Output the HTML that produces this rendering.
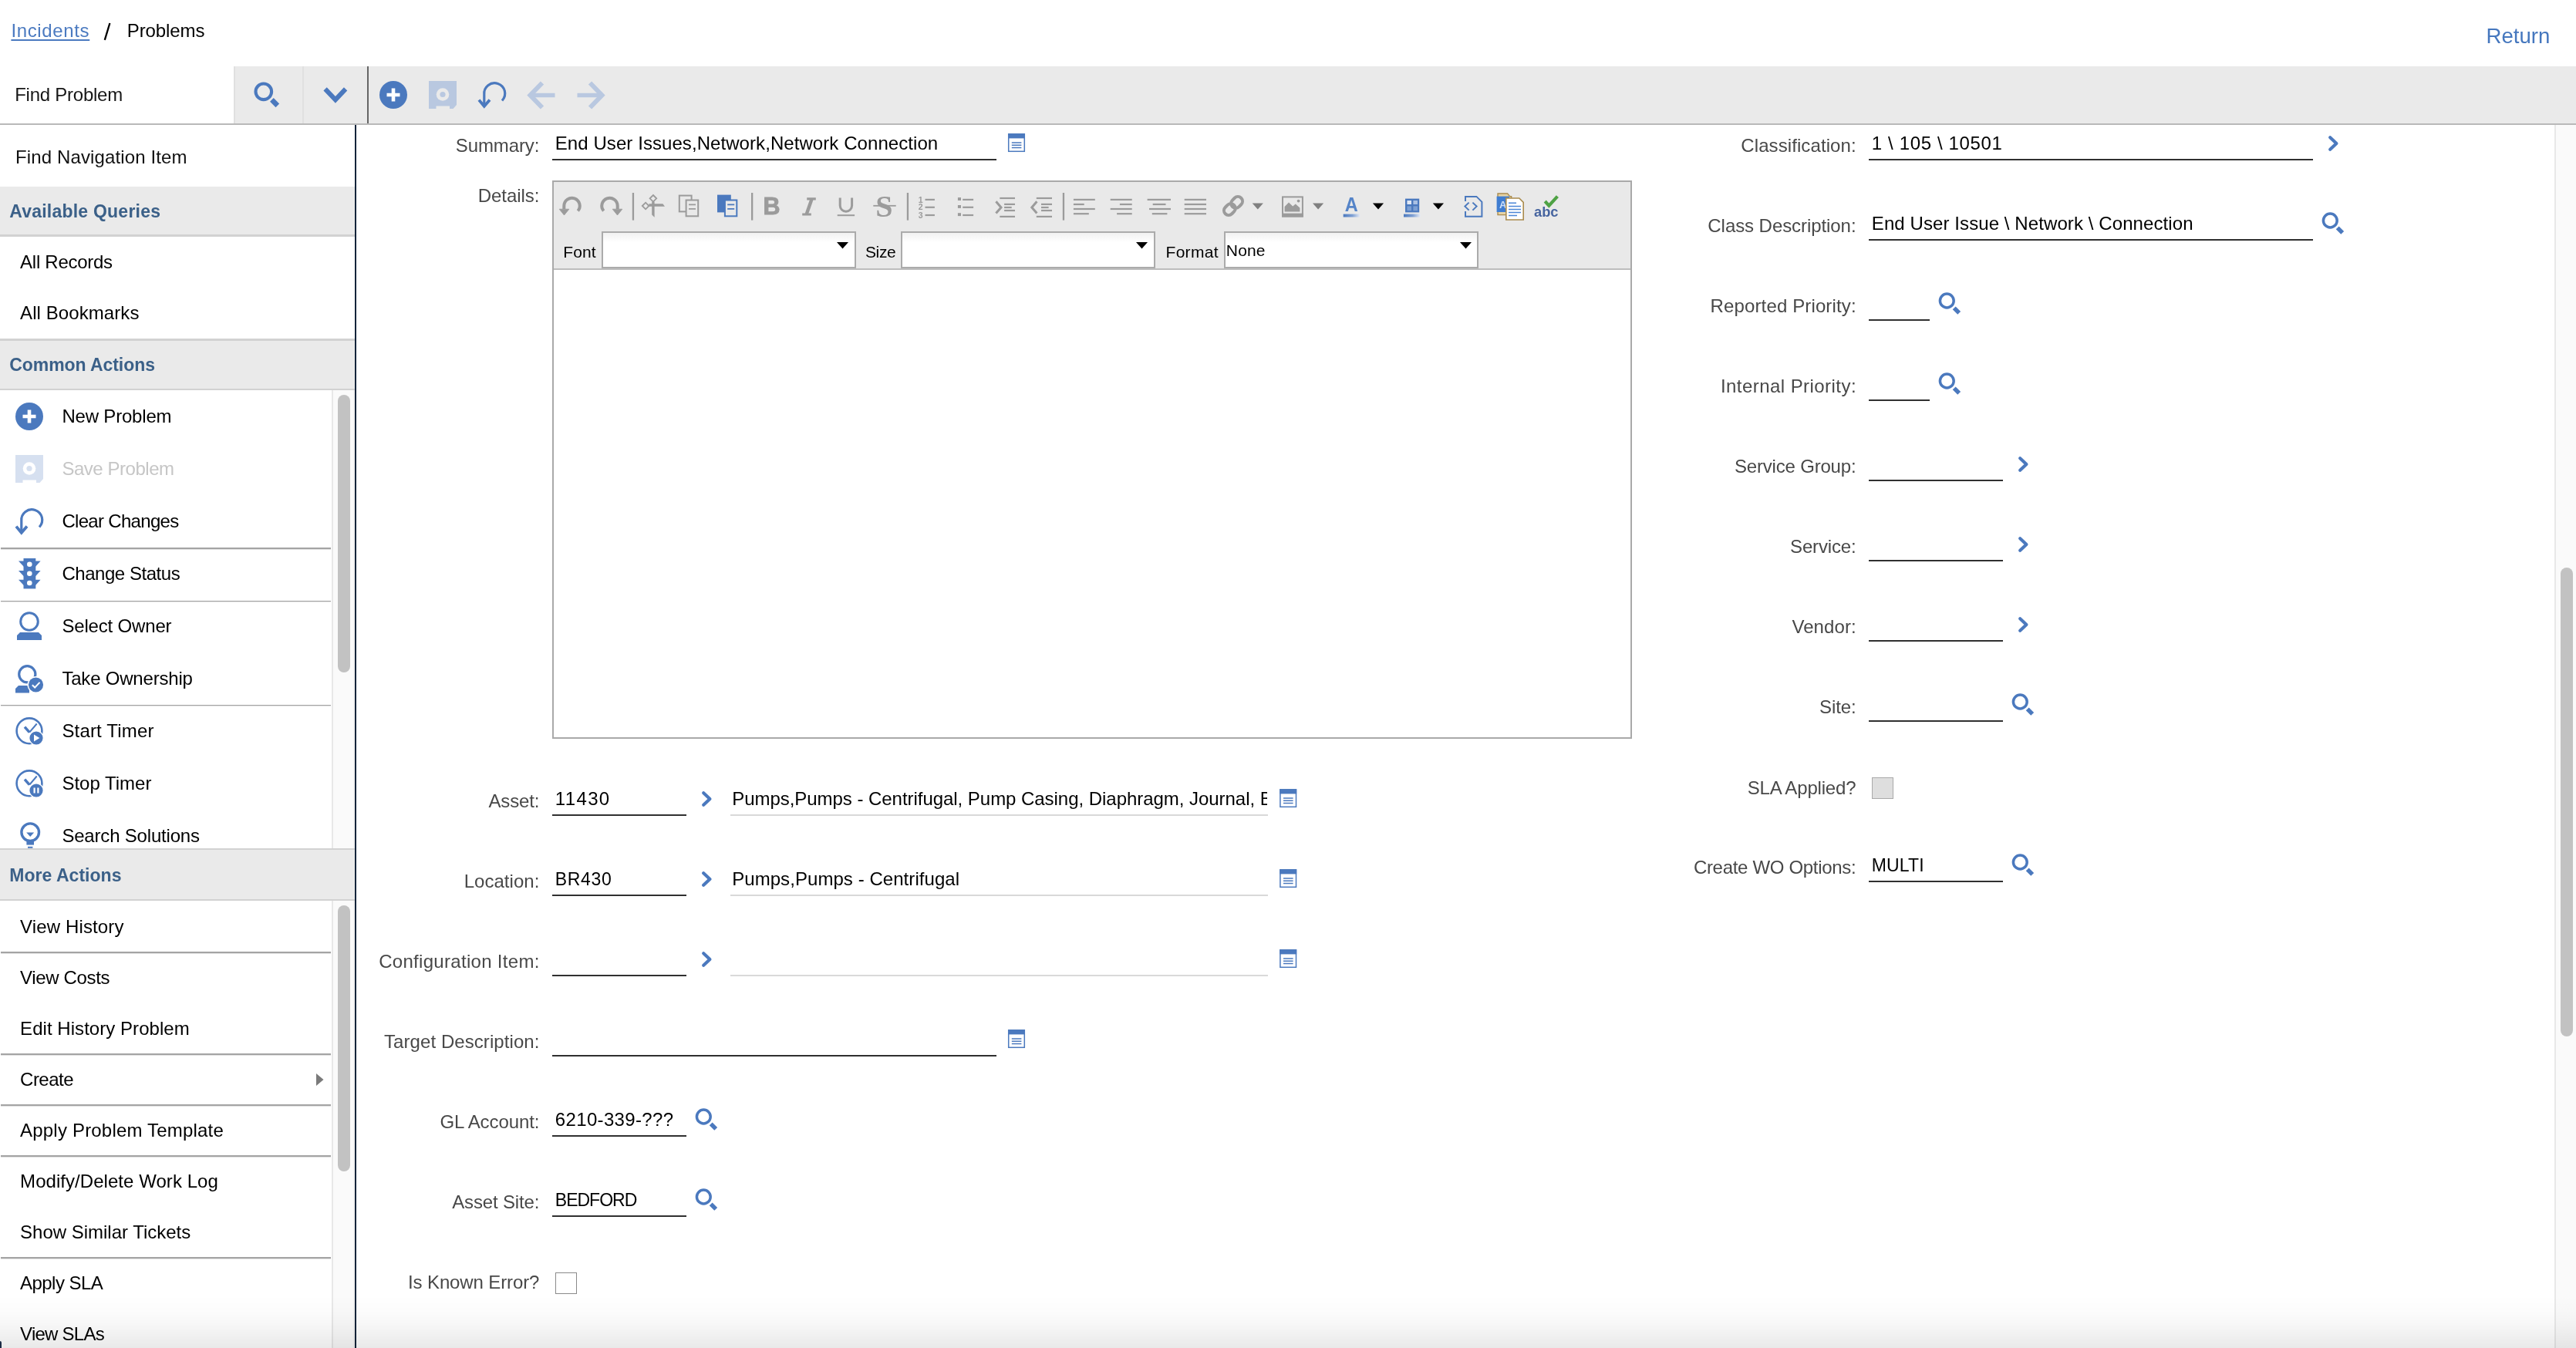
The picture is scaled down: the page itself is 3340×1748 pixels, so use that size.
<!DOCTYPE html>
<html lang="en"><head><meta charset="utf-8"><title>Problems</title>
<style>
html,body{margin:0;padding:0}
body{width:3340px;height:1748px;position:relative;overflow:hidden;background:#fff;font-family:"Liberation Sans",sans-serif;font-size:24px;color:#000}
.a{position:absolute}
.t{position:absolute;line-height:1;white-space:nowrap}
svg{overflow:visible}
</style></head><body>
<div id="app" class="a" style="left:0;top:0;width:3340px;height:1748px;will-change:transform">

<div id="header">
<div class="t" style="top:27.9px;font-size:24px;color:#4b7ac0;letter-spacing:0.643px;left:14.4px;text-decoration:underline;text-decoration-thickness:1.5px;text-underline-offset:3px;">Incidents</div>
<svg class="a" style="left:130px;top:26px;" width="20" height="30" viewBox="0 0 20 30"><path d="M12.4 4L5.8 25.8" stroke="#000" stroke-width="2.3" fill="none"/></svg>
<div class="t" style="top:27.9px;font-size:24px;color:#000;letter-spacing:-0.11px;left:164.8px;">Problems</div>
<div class="t" style="top:33.2px;font-size:27.6px;color:#4577be;letter-spacing:-0.008px;right:33.7px;">Return</div>
</div>
<div id="toolbar">
<div class="a" style="left:0px;top:86px;width:3340px;height:74.5px;background:#eaeaea;"></div>
<div class="a" style="left:0px;top:86px;width:303px;height:74.5px;background:#fff;"></div>
<div class="a" style="left:303px;top:86px;width:2px;height:74.5px;background:#e0e0e0;"></div>
<div class="a" style="left:392px;top:86px;width:2px;height:74.5px;background:#e0e0e0;"></div>
<div class="a" style="left:476px;top:86px;width:2px;height:74.5px;background:#666;"></div>
<div class="a" style="left:0px;top:160.3px;width:3340px;height:1.7px;background:#b9b9b9;"></div>
<div class="t" style="top:111.2px;font-size:24px;color:#161616;letter-spacing:-0.248px;left:19.2px;">Find Problem</div>
<svg class="a" style="left:0px;top:0px;" width="3340" height="162" viewBox="0 0 3340 162"><circle cx="341.8" cy="118.8" r="10.3" fill="none" stroke="#4b79be" stroke-width="4.1"/><path d="M352.4 129.4L359.8 136.8" stroke="#4b79be" stroke-width="6.6" fill="none"/><path d="M421.6 115.4L434.9 129.3L448.1 115.4" fill="none" stroke="#4b79be" stroke-width="6"/></svg>
<svg class="a" style="left:492px;top:105px;" width="36" height="36" viewBox="0 0 36 36"><circle cx="18" cy="18" r="18" fill="#4b79be"/><path d="M18 9.5v17M9.5 18h17" stroke="#fff" stroke-width="4.6" fill="none"/></svg>
<svg class="a" style="left:556px;top:105px;" width="36" height="36" viewBox="0 0 36 36"><path d="M0 0H36V31L31.5 36H27V32.5H9.5V36H0Z" fill="#b9c8e0"/><circle cx="18" cy="17.5" r="8.3" fill="#eaeaea"/><circle cx="18" cy="17.5" r="3.6" fill="#b9c8e0"/></svg>
<svg class="a" style="left:619.5px;top:107px;" width="37" height="34" viewBox="0 0 37 34"><path d="M31 23.5A13.5 13.5 0 1 0 7.8 15.6V30.5" fill="none" stroke="#4b79be" stroke-width="3.2"/><path d="M1 22.6L7.8 30.8L15 22.6" fill="none" stroke="#4b79be" stroke-width="3.8000000000000003" stroke-linejoin="miter"/></svg>
<svg class="a" style="left:684px;top:105.5px;" width="36" height="35" viewBox="0 0 36 35"><path d="M35.5 17.5H6" stroke="#b9c8e0" stroke-width="5.5" fill="none"/><path d="M19 1.5L3.5 17.5L19 33.5" stroke="#b9c8e0" stroke-width="6" fill="none"/></svg>
<svg class="a" style="left:748px;top:105.5px;" width="36" height="35" viewBox="0 0 36 35"><path d="M0.5 17.5H30" stroke="#b9c8e0" stroke-width="5.5" fill="none"/><path d="M17 1.5L32.5 17.5L17 33.5" stroke="#b9c8e0" stroke-width="6" fill="none"/></svg>
</div>
<div id="nav">
<div class="a" style="left:460px;top:162px;width:2px;height:1586px;background:#11243a;"></div>
<div class="t" style="top:191.5px;font-size:24px;color:#111;letter-spacing:0.131px;left:20.0px;">Find Navigation Item</div>
<div class="a" style="left:0px;top:242.3px;width:460px;height:62.099999999999966px;background:#eaeaea;"></div>
<div class="a" style="left:0px;top:304.4px;width:460px;height:2.2px;background:#d2d2d2;"></div>
<div class="t" style="top:263.0px;font-size:23px;color:#3b6088;font-weight:bold;letter-spacing:0.226px;left:12.2px;">Available Queries</div>
<div class="t" style="top:327.9px;font-size:24px;color:#000;letter-spacing:-0.271px;left:26.1px;">All Records</div>
<div class="t" style="top:393.7px;font-size:24px;color:#000;letter-spacing:0.077px;left:26.1px;">All Bookmarks</div>
<div class="a" style="left:0px;top:439.4px;width:460px;height:2.3px;background:#d2d2d2;"></div>
<div class="a" style="left:0px;top:441.7px;width:460px;height:62.30000000000001px;background:#eaeaea;"></div>
<div class="a" style="left:0px;top:504px;width:460px;height:2.2px;background:#d2d2d2;"></div>
<div class="t" style="top:462.3px;font-size:23px;color:#3b6088;font-weight:bold;letter-spacing:-0.057px;left:12.2px;">Common Actions</div>
<div class="a" style="left:430px;top:506.2px;width:30px;height:594px;background:#fafafa;border-left:2px solid #e8e8e8;border-right:2px solid #f1f1f1;box-sizing:border-box;"></div>
<div class="a" style="left:438px;top:512px;width:16px;height:360px;background:#c2c2c2;border-radius:8px;"></div>
<div class="t" style="top:527.9px;font-size:24px;color:#000;letter-spacing:-0.185px;left:80.4px;">New Problem</div>
<div class="t" style="top:595.9px;font-size:24px;color:#c6c6c6;letter-spacing:-0.458px;left:80.4px;">Save Problem</div>
<div class="t" style="top:663.9px;font-size:24px;color:#000;letter-spacing:-0.691px;left:80.4px;">Clear Changes</div>
<div class="t" style="top:731.9px;font-size:24px;color:#000;letter-spacing:-0.456px;left:80.4px;">Change Status</div>
<div class="t" style="top:799.9px;font-size:24px;color:#000;letter-spacing:-0.169px;left:80.4px;">Select Owner</div>
<div class="t" style="top:867.9px;font-size:24px;color:#000;letter-spacing:-0.198px;left:80.4px;">Take Ownership</div>
<div class="t" style="top:935.9px;font-size:24px;color:#000;letter-spacing:0.165px;left:80.4px;">Start Timer</div>
<div class="t" style="top:1003.9px;font-size:24px;color:#000;letter-spacing:-0.004px;left:80.4px;">Stop Timer</div>
<div class="t" style="top:1071.9px;font-size:24px;color:#000;letter-spacing:-0.19px;left:80.4px;">Search Solutions</div>
<div class="a" style="left:1px;top:710.4px;width:428px;height:1.5px;background:#a4a4a4;"></div>
<div class="a" style="left:1px;top:711.9px;width:428px;height:0.8px;background:#e2e2e2;"></div>
<div class="a" style="left:1px;top:778.6px;width:428px;height:1.5px;background:#a4a4a4;"></div>
<div class="a" style="left:1px;top:780.1px;width:428px;height:0.8px;background:#e2e2e2;"></div>
<div class="a" style="left:1px;top:913.8px;width:428px;height:1.5px;background:#a4a4a4;"></div>
<div class="a" style="left:1px;top:915.3px;width:428px;height:0.8px;background:#e2e2e2;"></div>
<div class="a" style="left:0;top:506px;width:430px;height:594px;overflow:hidden">
<svg class="a" style="left:20px;top:16px;" width="36" height="36" viewBox="0 0 36 36"><circle cx="18" cy="18" r="18" fill="#4b79be"/><path d="M18 9.5v17M9.5 18h17" stroke="#fff" stroke-width="4.6" fill="none"/></svg>
<svg class="a" style="left:20px;top:84px;" width="36" height="36" viewBox="0 0 36 36"><path d="M0 0H36V31L31.5 36H27V32.5H9.5V36H0Z" fill="#d6e0f0"/><circle cx="18" cy="17.5" r="8.3" fill="#fff"/><circle cx="18" cy="17.5" r="3.6" fill="#d6e0f0"/></svg>
<svg class="a" style="left:19.5px;top:154px;" width="37" height="34" viewBox="0 0 37 34"><path d="M31 23.5A13.5 13.5 0 1 0 7.8 15.6V30.5" fill="none" stroke="#4b79be" stroke-width="3.2"/><path d="M1 22.6L7.8 30.8L15 22.6" fill="none" stroke="#4b79be" stroke-width="3.8000000000000003" stroke-linejoin="miter"/></svg>
<svg class="a" style="left:23.7px;top:218.20000000000005px;" width="29" height="40" viewBox="0 0 29 40"><rect x="6.5" y="0" width="15.8" height="39.4" fill="#4b79be"/><path d="M7.5 3.5H0L7.5 11.5ZM21.3 3.5H28.6L21.3 11.5Z" fill="#4b79be"/><path d="M7.5 15.9H0L7.5 23.9ZM21.3 15.9H28.6L21.3 23.9Z" fill="#4b79be"/><path d="M7.5 27.8H0L7.5 35.8ZM21.3 27.8H28.6L21.3 35.8Z" fill="#4b79be"/><circle cx="14.3" cy="7.7" r="3.3" fill="#fff"/><circle cx="14.3" cy="19.7" r="3.3" fill="#fff"/><circle cx="14.3" cy="32" r="3.3" fill="#fff"/></svg>
<svg class="a" style="left:22px;top:288px;" width="32" height="36" viewBox="0 0 32 36"><circle cx="16" cy="12" r="11.3" fill="#fff" stroke="#4b79be" stroke-width="3"/><path d="M0 36V30L4 26H28L32 30V36Z" fill="#4b79be"/></svg>
<svg class="a" style="left:19.8px;top:355.6px;" width="38" height="37" viewBox="0 0 38 37"><circle cx="15.3" cy="12.3" r="10.6" fill="#fff" stroke="#4b79be" stroke-width="3.2"/><path d="M0 36.5V31L4 27H18V36.5Z" fill="#4b79be"/><circle cx="26.5" cy="26" r="11" fill="#fff"/><circle cx="26.5" cy="26" r="9.6" fill="#4b79be"/><path d="M21.8 26.2l3.4 3.3l6.3-6.6" fill="none" stroke="#fff" stroke-width="2"/></svg>
<svg class="a" style="left:19.9px;top:424px;" width="37" height="37" viewBox="0 0 37 37"><circle cx="18" cy="17.8" r="16.4" fill="none" stroke="#4b79be" stroke-width="2.6"/><path d="M12 12.7l6.2 7" fill="none" stroke="#4b79be" stroke-width="3.4"/><path d="M18.2 19.7l9.5-11.2" fill="none" stroke="#4b79be" stroke-width="2"/><circle cx="27" cy="27" r="9.8" fill="#fff"/><circle cx="27" cy="27" r="8.6" fill="#4b79be"/><path d="M24 22.6v8.8l7.4-4.4z" fill="#fff"/></svg>
<svg class="a" style="left:19.9px;top:492px;" width="37" height="37" viewBox="0 0 37 37"><circle cx="18" cy="17.8" r="16.4" fill="none" stroke="#4b79be" stroke-width="2.6"/><path d="M12 12.7l6.2 7" fill="none" stroke="#4b79be" stroke-width="3.4"/><path d="M18.2 19.7l9.5-11.2" fill="none" stroke="#4b79be" stroke-width="2"/><circle cx="27" cy="27" r="9.8" fill="#fff"/><circle cx="27" cy="27" r="8.6" fill="#4b79be"/><path d="M24.6 23.4v7.2M29.4 23.4v7.2" stroke="#fff" stroke-width="2.2" fill="none"/></svg>
<svg class="a" style="left:25.7px;top:560.2px;" width="27" height="36" viewBox="0 0 27 36"><circle cx="13.2" cy="13.2" r="11.3" fill="none" stroke="#4b79be" stroke-width="3.4"/><path d="M8.2 13.6h10l-5 5.4z" fill="#4b79be"/><path d="M8.4 24.8h9.6v4.8h-9.6z" fill="#4b79be"/><path d="M10 31.8h6.4v2h-6.4z" fill="#4b79be"/></svg>
</div>
<div class="a" style="left:0px;top:1100.0px;width:460px;height:2.3px;background:#d2d2d2;"></div>
<div class="a" style="left:0px;top:1102.3px;width:460px;height:63.600000000000136px;background:#eaeaea;"></div>
<div class="a" style="left:0px;top:1165.9px;width:460px;height:2.2px;background:#d2d2d2;"></div>
<div class="t" style="top:1124.0px;font-size:23px;color:#3b6088;font-weight:bold;letter-spacing:0.043px;left:12.2px;">More Actions</div>
<div class="a" style="left:430px;top:1168px;width:30px;height:580px;background:#fafafa;border-left:2px solid #e8e8e8;border-right:2px solid #f1f1f1;box-sizing:border-box;"></div>
<div class="a" style="left:438px;top:1174px;width:16px;height:344.5px;background:#c2c2c2;border-radius:8px;"></div>
<div class="t" style="top:1190.0px;font-size:24px;color:#000;letter-spacing:0.125px;left:26.1px;">View History</div>
<div class="t" style="top:1256.0px;font-size:24px;color:#000;letter-spacing:-0.345px;left:26.1px;">View Costs</div>
<div class="t" style="top:1322.0px;font-size:24px;color:#000;letter-spacing:0.046px;left:26.1px;">Edit History Problem</div>
<div class="t" style="top:1388.0px;font-size:24px;color:#000;letter-spacing:-0.527px;left:26.1px;">Create</div>
<div class="t" style="top:1454.0px;font-size:24px;color:#000;letter-spacing:0.191px;left:26.1px;">Apply Problem Template</div>
<div class="t" style="top:1520.0px;font-size:24px;color:#000;letter-spacing:0.049px;left:26.1px;">Modify/Delete Work Log</div>
<div class="t" style="top:1586.0px;font-size:24px;color:#000;letter-spacing:-0.015px;left:26.1px;">Show Similar Tickets</div>
<div class="t" style="top:1652.0px;font-size:24px;color:#000;letter-spacing:-0.558px;left:26.1px;">Apply SLA</div>
<div class="t" style="top:1718.0px;font-size:24px;color:#000;letter-spacing:-0.752px;left:26.1px;">View SLAs</div>
<div class="a" style="left:1px;top:1234px;width:428px;height:1.5px;background:#a4a4a4;"></div>
<div class="a" style="left:1px;top:1235.5px;width:428px;height:0.8px;background:#e2e2e2;"></div>
<div class="a" style="left:1px;top:1366px;width:428px;height:1.5px;background:#a4a4a4;"></div>
<div class="a" style="left:1px;top:1367.5px;width:428px;height:0.8px;background:#e2e2e2;"></div>
<div class="a" style="left:1px;top:1432px;width:428px;height:1.5px;background:#a4a4a4;"></div>
<div class="a" style="left:1px;top:1433.5px;width:428px;height:0.8px;background:#e2e2e2;"></div>
<div class="a" style="left:1px;top:1498px;width:428px;height:1.5px;background:#a4a4a4;"></div>
<div class="a" style="left:1px;top:1499.5px;width:428px;height:0.8px;background:#e2e2e2;"></div>
<div class="a" style="left:1px;top:1630px;width:428px;height:1.5px;background:#a4a4a4;"></div>
<div class="a" style="left:1px;top:1631.5px;width:428px;height:0.8px;background:#e2e2e2;"></div>
<svg class="a" style="left:410px;top:1391.5px;" width="10" height="16" viewBox="0 0 10 16"><path d="M0 0L9.5 8L0 16Z" fill="#7a7a7a"/></svg>
</div>
<div id="form">
<div class="t" style="top:177.0px;font-size:24px;color:#484848;letter-spacing:-0.107px;right:2640.7px;">Summary:</div>
<div class="a" style="left:716px;top:206px;width:576px;height:2px;background:#303030;"></div>
<div class="t" style="top:174.2px;font-size:24px;color:#000;letter-spacing:0.07px;left:719.8px;">End User Issues,Network,Network Connection</div>
<div class="t" style="top:241.7px;font-size:24px;color:#484848;letter-spacing:-0.047px;right:2640.6px;">Details:</div>
<div class="t" style="top:1027.0px;font-size:24px;color:#484848;letter-spacing:-0.138px;right:2640.7px;">Asset:</div>
<div class="t" style="top:1131.0px;font-size:24px;color:#484848;letter-spacing:0.037px;right:2640.6px;">Location:</div>
<div class="t" style="top:1235.0px;font-size:24px;color:#484848;letter-spacing:0.302px;right:2640.3px;">Configuration Item:</div>
<div class="t" style="top:1339.0px;font-size:24px;color:#484848;letter-spacing:0.073px;right:2640.5px;">Target Description:</div>
<div class="t" style="top:1443.0px;font-size:24px;color:#484848;letter-spacing:-0.096px;right:2640.7px;">GL Account:</div>
<div class="t" style="top:1547.0px;font-size:24px;color:#484848;letter-spacing:-0.142px;right:2640.7px;">Asset Site:</div>
<div class="a" style="left:716px;top:1056px;width:174px;height:2px;background:#303030;"></div>
<div class="t" style="top:1024.2px;font-size:24px;color:#000;letter-spacing:1.361px;left:719.8px;">11430</div>
<div class="a" style="left:947px;top:1015px;width:696px;height:40px;overflow:hidden">
<div class="t" style="left:2.2px;top:8.7px;font-size:24px;letter-spacing:-0.041px">Pumps,Pumps - Centrifugal, Pump Casing, Diaphragm, Journal, Bearing</div></div>
<div class="a" style="left:947px;top:1056px;width:697px;height:2px;background:#d9d9d9;"></div>
<div class="a" style="left:716px;top:1160px;width:174px;height:2px;background:#303030;"></div>
<div class="t" style="top:1129.0px;font-size:23px;color:#000;letter-spacing:0.669px;left:719.8px;">BR430</div>
<div class="a" style="left:947px;top:1160px;width:697px;height:2px;background:#d9d9d9;"></div>
<div class="t" style="top:1128.2px;font-size:24px;color:#000;letter-spacing:0.06px;left:949.2px;">Pumps,Pumps - Centrifugal</div>
<div class="a" style="left:716px;top:1264px;width:174px;height:2px;background:#303030;"></div>
<div class="a" style="left:947px;top:1264px;width:697px;height:2px;background:#d9d9d9;"></div>
<div class="a" style="left:716px;top:1368px;width:576px;height:2px;background:#303030;"></div>
<div class="a" style="left:716px;top:1472px;width:174px;height:2px;background:#303030;"></div>
<div class="t" style="top:1440.2px;font-size:24px;color:#000;letter-spacing:0.349px;left:719.8px;">6210-339-???</div>
<div class="a" style="left:716px;top:1576px;width:174px;height:2px;background:#303030;"></div>
<div class="t" style="top:1545.0px;font-size:23px;color:#000;letter-spacing:-0.992px;left:719.8px;">BEDFORD</div>
<div class="t" style="top:1650.8px;font-size:24px;color:#484848;letter-spacing:-0.119px;right:2640.7px;">Is Known Error?</div>
<div class="a" style="left:720px;top:1650px;width:27.6px;height:27.6px;background:#fff;border:1.6px solid #8a8a8a;box-sizing:border-box;"></div>
<div class="t" style="top:177.0px;font-size:24px;color:#484848;letter-spacing:0.089px;right:933.3px;">Classification:</div>
<div class="t" style="top:281.0px;font-size:24px;color:#484848;letter-spacing:-0.07px;right:933.5px;">Class Description:</div>
<div class="t" style="top:385.0px;font-size:24px;color:#484848;letter-spacing:0.133px;right:933.3px;">Reported Priority:</div>
<div class="t" style="top:489.0px;font-size:24px;color:#484848;letter-spacing:0.444px;right:933.0px;">Internal Priority:</div>
<div class="t" style="top:593.0px;font-size:24px;color:#484848;letter-spacing:-0.19px;right:933.6px;">Service Group:</div>
<div class="t" style="top:697.0px;font-size:24px;color:#484848;letter-spacing:-0.171px;right:933.6px;">Service:</div>
<div class="t" style="top:801.0px;font-size:24px;color:#484848;letter-spacing:0.077px;right:933.3px;">Vendor:</div>
<div class="t" style="top:905.0px;font-size:24px;color:#484848;letter-spacing:-0.106px;right:933.5px;">Site:</div>
<div class="t" style="top:1113.0px;font-size:24px;color:#484848;letter-spacing:-0.316px;right:933.7px;">Create WO Options:</div>
<div class="a" style="left:2423px;top:206px;width:576px;height:2px;background:#303030;"></div>
<div class="t" style="top:174.2px;font-size:24px;color:#000;letter-spacing:0.64px;left:2426.8px;">1 \ 105 \ 10501</div>
<div class="a" style="left:2423px;top:310px;width:576px;height:2px;background:#303030;"></div>
<div class="t" style="top:278.2px;font-size:24px;color:#000;letter-spacing:0.088px;left:2426.8px;">End User Issue \ Network \ Connection</div>
<div class="a" style="left:2423px;top:414px;width:79px;height:2px;background:#303030;"></div>
<div class="a" style="left:2423px;top:518px;width:79px;height:2px;background:#303030;"></div>
<div class="a" style="left:2423px;top:622px;width:174px;height:2px;background:#303030;"></div>
<div class="a" style="left:2423px;top:726px;width:174px;height:2px;background:#303030;"></div>
<div class="a" style="left:2423px;top:830px;width:174px;height:2px;background:#303030;"></div>
<div class="a" style="left:2423px;top:934px;width:174px;height:2px;background:#303030;"></div>
<div class="t" style="top:1010.0px;font-size:24px;color:#484848;letter-spacing:-0.172px;right:933.6px;">SLA Applied?</div>
<div class="a" style="left:2427px;top:1008px;width:27.6px;height:27.6px;background:#dedede;border:1.6px solid #a9a9a9;box-sizing:border-box;"></div>
<div class="a" style="left:2423px;top:1142px;width:174px;height:2px;background:#303030;"></div>
<div class="t" style="top:1111.0px;font-size:23px;color:#000;letter-spacing:0.152px;left:2426.8px;">MULTI</div>
<svg class="a" style="left:0px;top:0px;" width="3340" height="1748" viewBox="0 0 3340 1748"><rect x="1307.7" y="173.9" width="20.6" height="22.4" fill="#fff" stroke="#4b79be" stroke-width="1.5"/><rect x="1307.0" y="173.2" width="22" height="6.2" fill="#4b79be"/><path d="M1311.8 185.0h12.6M1311.8 188.3h12.6M1311.8 191.5h12.6" stroke="#4b79be" stroke-width="1.5" fill="none"/><path d="M912.2 1028.3l8.2 7.7l-8.2 7.7" fill="none" stroke="#4b79be" stroke-width="4.2" stroke-linecap="round" stroke-linejoin="round"/><rect x="1659.9" y="1023.9" width="20.6" height="22.4" fill="#fff" stroke="#4b79be" stroke-width="1.5"/><rect x="1659.2" y="1023.2" width="22" height="6.2" fill="#4b79be"/><path d="M1664.0 1035.0h12.6M1664.0 1038.3h12.6M1664.0 1041.5h12.6" stroke="#4b79be" stroke-width="1.5" fill="none"/><path d="M912.2 1132.3l8.2 7.7l-8.2 7.7" fill="none" stroke="#4b79be" stroke-width="4.2" stroke-linecap="round" stroke-linejoin="round"/><rect x="1659.9" y="1127.9" width="20.6" height="22.4" fill="#fff" stroke="#4b79be" stroke-width="1.5"/><rect x="1659.2" y="1127.2" width="22" height="6.2" fill="#4b79be"/><path d="M1664.0 1139.0h12.6M1664.0 1142.3h12.6M1664.0 1145.5h12.6" stroke="#4b79be" stroke-width="1.5" fill="none"/><path d="M912.2 1236.3l8.2 7.7l-8.2 7.7" fill="none" stroke="#4b79be" stroke-width="4.2" stroke-linecap="round" stroke-linejoin="round"/><rect x="1659.9" y="1231.9" width="20.6" height="22.4" fill="#fff" stroke="#4b79be" stroke-width="1.5"/><rect x="1659.2" y="1231.2" width="22" height="6.2" fill="#4b79be"/><path d="M1664.0 1243.0h12.6M1664.0 1246.3h12.6M1664.0 1249.5h12.6" stroke="#4b79be" stroke-width="1.5" fill="none"/><rect x="1307.7" y="1335.9" width="20.6" height="22.4" fill="#fff" stroke="#4b79be" stroke-width="1.5"/><rect x="1307.0" y="1335.2" width="22" height="6.2" fill="#4b79be"/><path d="M1311.8 1347.0h12.6M1311.8 1350.3h12.6M1311.8 1353.5h12.6" stroke="#4b79be" stroke-width="1.5" fill="none"/><circle cx="912.3" cy="1448.0" r="8.9" fill="none" stroke="#4b79be" stroke-width="3.5"/><path d="M921.7 1457.4L928.2 1463.9" stroke="#4b79be" stroke-width="5.5" fill="none"/><circle cx="912.3" cy="1552.0" r="8.9" fill="none" stroke="#4b79be" stroke-width="3.5"/><path d="M921.7 1561.4L928.2 1567.9" stroke="#4b79be" stroke-width="5.5" fill="none"/><path d="M3021.2 178.3l8.2 7.7l-8.2 7.7" fill="none" stroke="#4b79be" stroke-width="4.2" stroke-linecap="round" stroke-linejoin="round"/><circle cx="3021.3" cy="286.0" r="8.9" fill="none" stroke="#4b79be" stroke-width="3.5"/><path d="M3030.7 295.4L3037.2 301.9" stroke="#4b79be" stroke-width="5.5" fill="none"/><circle cx="2524.3" cy="390.0" r="8.9" fill="none" stroke="#4b79be" stroke-width="3.5"/><path d="M2533.7 399.4L2540.2 405.9" stroke="#4b79be" stroke-width="5.5" fill="none"/><circle cx="2524.3" cy="494.0" r="8.9" fill="none" stroke="#4b79be" stroke-width="3.5"/><path d="M2533.7 503.4L2540.2 509.9" stroke="#4b79be" stroke-width="5.5" fill="none"/><path d="M2619.2 594.3l8.2 7.7l-8.2 7.7" fill="none" stroke="#4b79be" stroke-width="4.2" stroke-linecap="round" stroke-linejoin="round"/><path d="M2619.2 698.3l8.2 7.7l-8.2 7.7" fill="none" stroke="#4b79be" stroke-width="4.2" stroke-linecap="round" stroke-linejoin="round"/><path d="M2619.2 802.3l8.2 7.7l-8.2 7.7" fill="none" stroke="#4b79be" stroke-width="4.2" stroke-linecap="round" stroke-linejoin="round"/><circle cx="2619.3" cy="910.0" r="8.9" fill="none" stroke="#4b79be" stroke-width="3.5"/><path d="M2628.7 919.4L2635.2 925.9" stroke="#4b79be" stroke-width="5.5" fill="none"/><circle cx="2619.3" cy="1118.0" r="8.9" fill="none" stroke="#4b79be" stroke-width="3.5"/><path d="M2628.7 1127.4L2635.2 1133.9" stroke="#4b79be" stroke-width="5.5" fill="none"/></svg>
<div class="a" style="left:716.3px;top:234.2px;width:1399.5px;height:723.5px;box-sizing:border-box;border:2px solid #a9a9a9;background:#fff"></div>
<div class="a" style="left:718.3px;top:236.2px;width:1395.5px;height:112px;background:#e9e9e9;"></div>
<div class="a" style="left:718.3px;top:348px;width:1395.5px;height:1.8px;background:#bdbdbd;"></div>
<svg class="a" style="left:0;top:0" width="3340" height="1748" viewBox="0 0 3340 1748"><defs><linearGradient id="barg" x1="0" x2="1" y1="0" y2="0"><stop offset="0" stop-color="#4b79be"/><stop offset="0.55" stop-color="#7fa0d4"/><stop offset="1" stop-color="#e4eaf5"/></linearGradient></defs><path d="M749.3 273.5A10.2 10.2 0 1 0 731.3 266.9V271" fill="none" stroke="#9b9b9b" stroke-width="4"/><path d="M725.2 271.2H737.8L731.5 279Z" fill="#9b9b9b" stroke="#9b9b9b" stroke-width="0.8" stroke-linejoin="round"/><g transform="translate(1532,0) scale(-1,1)"><path d="M749.3 273.5A10.2 10.2 0 1 0 731.3 266.9V271" fill="none" stroke="#9b9b9b" stroke-width="4"/><path d="M725.2 271.2H737.8L731.5 279Z" fill="#9b9b9b" stroke="#9b9b9b" stroke-width="0.8" stroke-linejoin="round"/></g><rect x="819.8" y="250" width="2.3" height="35.6" fill="#9b9b9b"/><rect x="974" y="250" width="2.3" height="35.6" fill="#9b9b9b"/><rect x="1175.8" y="250" width="2.3" height="35.6" fill="#9b9b9b"/><rect x="1377.8" y="250" width="2.3" height="35.6" fill="#9b9b9b"/><path d="M845.2 261.4H848.6V281.8L845.2 278.4Z" fill="#9b9b9b"/><path d="M841.4 264.3H859.4L862 267.7H841.4Z" fill="#9b9b9b"/><path d="M846.9 253l4.3 4.3l-4.3 4.3l-4.3-4.3z" fill="none" stroke="#9b9b9b" stroke-width="1.8"/><path d="M832.8 267l4.3-4.3l4.3 4.3l-4.3 4.3z" fill="none" stroke="#9b9b9b" stroke-width="1.8"/><rect x="880.8" y="253.6" width="15.8" height="20.8" fill="none" stroke="#9b9b9b" stroke-width="2"/><rect x="889.6" y="259.5" width="15.6" height="20.8" fill="#e9e9e9" stroke="#9b9b9b" stroke-width="2"/><path d="M893 265.3h9M893 270.8h9" stroke="#9b9b9b" stroke-width="1.8" fill="none"/><rect x="930" y="252.6" width="17.8" height="22.8" fill="#4b79be"/><rect x="939.9" y="259.5" width="15.4" height="20.8" fill="#e9e9e9" stroke="#4b79be" stroke-width="2"/><path d="M943.2 265.3h9M943.2 270.8h9" stroke="#4b79be" stroke-width="1.8" fill="none"/><text x="989.6" y="278.3" font-family="Liberation Sans" font-weight="bold" font-size="30.5" fill="#9b9b9b" stroke="#9b9b9b" stroke-width="0.9">B</text><path d="M1046.2 256.2h11.6v3.2h-11.6zM1040.2 276.4h11.6v3.2h-11.6z" fill="#9b9b9b"/><path d="M1052.4 258.6L1045.8 277.4" stroke="#9b9b9b" stroke-width="4.4" fill="none"/><path d="M1089.2 256.4V266.5a7.7 7.7 0 0 0 15.4 0V256.4" fill="none" stroke="#9b9b9b" stroke-width="3"/><path d="M1085.7 279.2h22.4" stroke="#9b9b9b" stroke-width="2" fill="none"/><text x="1135.2" y="281.4" font-family="Liberation Serif" font-weight="bold" font-size="40" fill="#9b9b9b">S</text><path d="M1132.3 266.8h29.4" stroke="#9b9b9b" stroke-width="1.8" fill="none"/><text x="1190.8" y="262.5" font-family="Liberation Sans" font-weight="bold" font-size="10.5" fill="#9b9b9b">1</text><rect x="1199.5" y="257.79999999999995" width="12.4" height="2.2" fill="#9b9b9b"/><text x="1190.8" y="272.40000000000003" font-family="Liberation Sans" font-weight="bold" font-size="10.5" fill="#9b9b9b">2</text><rect x="1199.5" y="267.7" width="12.4" height="2.2" fill="#9b9b9b"/><text x="1190.8" y="282.6" font-family="Liberation Sans" font-weight="bold" font-size="10.5" fill="#9b9b9b">3</text><rect x="1199.5" y="277.9" width="12.4" height="2.2" fill="#9b9b9b"/><rect x="1241.9" y="256.09999999999997" width="4.1" height="3.9" fill="#9b9b9b"/><rect x="1248.2" y="257.79999999999995" width="13.9" height="2.2" fill="#9b9b9b"/><rect x="1241.9" y="266.0" width="4.1" height="3.9" fill="#9b9b9b"/><rect x="1248.2" y="267.7" width="13.9" height="2.2" fill="#9b9b9b"/><rect x="1241.9" y="276.2" width="4.1" height="3.9" fill="#9b9b9b"/><rect x="1248.2" y="277.9" width="13.9" height="2.2" fill="#9b9b9b"/><path d="M1291.4 261.2l6.6 7.7l-6.6 7.7" fill="none" stroke="#9b9b9b" stroke-width="3"/><rect x="1296.3" y="255.9" width="19.7" height="2.2" fill="#9b9b9b"/><rect x="1302.1" y="263.79999999999995" width="13.9" height="2.2" fill="#9b9b9b"/><rect x="1302.1" y="267.9" width="9.6" height="2.2" fill="#9b9b9b"/><rect x="1302.1" y="271.9" width="13.9" height="2.2" fill="#9b9b9b"/><rect x="1296.3" y="279.79999999999995" width="19.7" height="2.2" fill="#9b9b9b"/><path d="M1344.4 261.2l-6.6 7.7l6.6 7.7" fill="none" stroke="#9b9b9b" stroke-width="3"/><rect x="1343.8" y="255.9" width="20.2" height="2.2" fill="#9b9b9b"/><rect x="1350" y="263.79999999999995" width="14.0" height="2.2" fill="#9b9b9b"/><rect x="1350" y="267.9" width="9.6" height="2.2" fill="#9b9b9b"/><rect x="1350" y="271.9" width="14.0" height="2.2" fill="#9b9b9b"/><rect x="1343.8" y="279.79999999999995" width="20.2" height="2.2" fill="#9b9b9b"/><rect x="1391.9" y="257.79999999999995" width="27.9" height="2.2" fill="#9b9b9b"/><rect x="1391.9" y="263.9" width="13.8" height="2.2" fill="#9b9b9b"/><rect x="1391.9" y="269.9" width="27.9" height="2.2" fill="#9b9b9b"/><rect x="1391.9" y="276.09999999999997" width="19.9" height="2.2" fill="#9b9b9b"/><rect x="1439.7" y="257.79999999999995" width="28.0" height="2.2" fill="#9b9b9b"/><rect x="1451.9" y="263.9" width="15.8" height="2.2" fill="#9b9b9b"/><rect x="1439.7" y="269.9" width="28.0" height="2.2" fill="#9b9b9b"/><rect x="1448.1" y="276.09999999999997" width="19.6" height="2.2" fill="#9b9b9b"/><rect x="1487.6" y="257.79999999999995" width="30.4" height="2.2" fill="#9b9b9b"/><rect x="1494.7" y="263.9" width="16.8" height="2.2" fill="#9b9b9b"/><rect x="1490" y="269.9" width="28.0" height="2.2" fill="#9b9b9b"/><rect x="1493.8" y="276.09999999999997" width="19.6" height="2.2" fill="#9b9b9b"/><rect x="1535.7" y="257.79999999999995" width="28.3" height="2.2" fill="#9b9b9b"/><rect x="1535.7" y="263.9" width="28.3" height="2.2" fill="#9b9b9b"/><rect x="1535.7" y="269.9" width="28.3" height="2.2" fill="#9b9b9b"/><rect x="1535.7" y="276.09999999999997" width="28.3" height="2.2" fill="#9b9b9b"/><g transform="rotate(-45 1599 267)" fill="none" stroke="#9b9b9b" stroke-width="4"><rect x="1584.5" y="261" width="16" height="12" rx="6"/><rect x="1597.5" y="261" width="16" height="12" rx="6"/></g><path d="M1623.7 263.6h14.2l-7.1 8z" fill="#808080"/><rect x="1663" y="255.4" width="25.9" height="25.1" fill="none" stroke="#9b9b9b" stroke-width="2"/><rect x="1662" y="276.6" width="27.9" height="4.9" fill="#9b9b9b"/><path d="M1665.6 274.6V268l5.4-5.6l5.2 5.2l3.6-3l5.6 5v5z" fill="#9b9b9b"/><circle cx="1683.6" cy="260.6" r="1.9" fill="#9b9b9b"/><path d="M1702 263.6h14.2l-7.1 8z" fill="#808080"/><text x="1743.8" y="274.2" font-family="Liberation Sans" font-weight="bold" font-size="26" fill="#5584c8" textLength="17" lengthAdjust="spacingAndGlyphs">A</text><rect x="1741.7" y="277.6" width="21.5" height="3.9" fill="url(#barg)"/><path d="M1779.9 263.6h14.2l-7.1 8z" fill="#000"/><rect x="1822" y="257.6" width="18.2" height="17.8" fill="#4b79be"/><rect x="1824.4" y="260" width="5.6" height="5" fill="#dfe7f4"/><rect x="1832.4" y="260" width="5.6" height="5" fill="#a9c0e3"/><rect x="1824.4" y="267.4" width="5.6" height="5.8" fill="#7c9fd3"/><rect x="1832.4" y="267.4" width="5.6" height="5.8" fill="#7c9fd3"/><rect x="1820" y="277.6" width="21.5" height="3.9" fill="url(#barg)"/><path d="M1857.8 263.6h14.2l-7.1 8z" fill="#000"/><path d="M1900 261V254.9h14.4l7 7v18.9h-21.4V274" fill="none" stroke="#4b79be" stroke-width="2"/><path d="M1904.6 262.6l-5.2 5l5.2 5M1909.4 262.6l5.2 5l-5.2 5" fill="none" stroke="#4b79be" stroke-width="2"/><path d="M1942 251h12.6l3 3.6h2v24h-17.6z" fill="#e6d3a4" stroke="#a98b4e" stroke-width="1.4"/><rect x="1940.6" y="254.6" width="16.4" height="20.4" fill="#3f7dd1"/><text x="1944" y="270" font-family="Liberation Sans" font-weight="bold" font-size="13" fill="#cfe0f6">A</text><path d="M1952.8 257h17l5.4 5.4v22.6h-22.4z" fill="#fff" stroke="#a98b4e" stroke-width="1.6"/><path d="M1956 263.2h10M1956 267.4h16M1956 271.4h16M1956 275.4h16M1956 279.4h11" stroke="#4b86d6" stroke-width="1.5" fill="none"/><text x="1989" y="281.2" font-family="Liberation Sans" font-weight="bold" font-size="19" fill="#46649f" textLength="31.5" lengthAdjust="spacingAndGlyphs">abc</text><path d="M2003.2 261l5.2 5.6l11-12" fill="none" stroke="#4ea244" stroke-width="4.2"/></svg>
<div class="t" style="top:316.3px;font-size:21px;color:#000;letter-spacing:0.16px;left:730.2px;">Font</div>
<div class="a" style="left:780px;top:300px;width:329.6px;height:47.6px;box-sizing:border-box;border:2px solid #ababab;background:linear-gradient(#f1f1f1,#fff 12px)"></div>
<svg class="a" style="left:1085.1999999999998px;top:314px;" width="15" height="9" viewBox="0 0 15 9"><path d="M0 0H15L7.5 8.6Z" fill="#000"/></svg>
<div class="t" style="top:316.3px;font-size:21px;color:#000;letter-spacing:-0.384px;left:1122.0px;">Size</div>
<div class="a" style="left:1168px;top:300px;width:329.6px;height:47.6px;box-sizing:border-box;border:2px solid #ababab;background:linear-gradient(#f1f1f1,#fff 12px)"></div>
<svg class="a" style="left:1473.1999999999998px;top:314px;" width="15" height="9" viewBox="0 0 15 9"><path d="M0 0H15L7.5 8.6Z" fill="#000"/></svg>
<div class="t" style="top:316.3px;font-size:21px;color:#000;letter-spacing:0.299px;left:1511.5px;">Format</div>
<div class="a" style="left:1587.4px;top:300px;width:329.6px;height:47.6px;box-sizing:border-box;border:2px solid #ababab;background:linear-gradient(#f1f1f1,#fff 12px)"></div>
<svg class="a" style="left:1892.6px;top:314px;" width="15" height="9" viewBox="0 0 15 9"><path d="M0 0H15L7.5 8.6Z" fill="#000"/></svg>
<div class="t" style="top:314.3px;font-size:21px;color:#000;letter-spacing:0.166px;left:1589.8px;">None</div>
</div>
<div class="a" style="left:3312px;top:162px;width:28px;height:1586px;background:#fafafa;border-left:2px solid #e8e8e8;box-sizing:border-box;"></div>
<div class="a" style="left:3320px;top:736px;width:16px;height:608px;background:#c2c2c2;border-radius:8px;"></div>
<div class="a" style="left:0;top:1680px;width:3340px;height:68px;background:linear-gradient(rgba(0,0,0,0) 0%,rgba(0,0,0,0.010) 28%,rgba(0,0,0,0.028) 50%,rgba(0,0,0,0.055) 75%,rgba(0,0,0,0.088) 100%);pointer-events:none"></div>
<div class="a" style="left:0px;top:1739px;width:2px;height:9px;background:#1c2b45;border-top-right-radius:2px;"></div>
</div>
</body></html>
